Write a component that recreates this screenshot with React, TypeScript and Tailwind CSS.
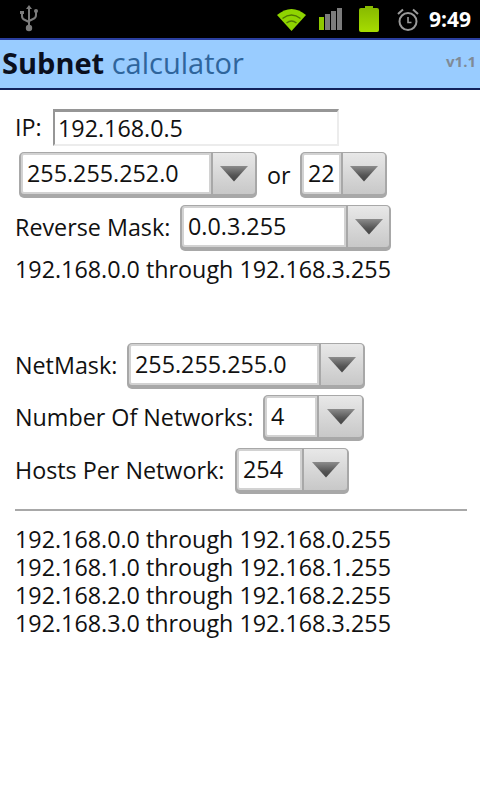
function Arrow() {
  return (
    <svg width="28" height="17" viewBox="0 0 28 17" className="block">
      <defs>
        <linearGradient id="arrowFill" x1="0" y1="0" x2="0" y2="1">
          <stop offset="0" stopColor="#8c8c8c" />
          <stop offset="0.6" stopColor="#555" />
          <stop offset="1" stopColor="#444" />
        </linearGradient>
      </defs>
      <path d="M0 1 H28 L14 16.5 Z" fill="url(#arrowFill)" />
    </svg>
  );
}

function Select({ value, box, btn }: { value: string; box: string; btn: string }) {
  return (
    <div className="flex h-[46px] shrink-0 rounded-[5px] bg-[#a8a8a8] pt-[1px] pb-[4px] pl-[2px] pr-[2px]">
      <div className={`${box} flex items-center rounded-l-[3px] border-2 border-[#d2d2d2] bg-white pl-[4px] pt-[1px] leading-none`}>{value}</div>
      <div className={`${btn} ml-[2px] flex items-center justify-center rounded-r-[3px] bg-gradient-to-b from-[#e8e8e8] to-[#c8c8c8]`}>
        <Arrow />
      </div>
    </div>
  );
}

const ranges = [
  '192.168.0.0 through 192.168.0.255',
  '192.168.1.0 through 192.168.1.255',
  '192.168.2.0 through 192.168.2.255',
  '192.168.3.0 through 192.168.3.255',
];

export default function App() {
  return (
    <div className="h-[800px] w-[480px] overflow-hidden bg-white font-['Open_Sans',sans-serif] text-[23.3px] text-[#111]">
      {/* status bar */}
      <div className="flex h-[38px] items-center bg-black pl-[20px] pr-[9px]">
        <svg width="18" height="27" viewBox="0 0 18 27" className="mt-[-1px]">
          <g fill="none" stroke="#7c7c7c" strokeWidth="2">
            <path d="M9 3 V22" />
            <path d="M2 8 V11 Q2 14 5 15 L9 17" />
            <path d="M16 7 V10 Q16 13 13 14 L9 16" />
          </g>
          <path d="M9 0 L12 4 H6 Z M0 6 H4 V9 H0 Z" fill="#7c7c7c" />
          <circle cx="16" cy="6" r="2" fill="#7c7c7c" />
          <circle cx="9" cy="23" r="3.2" fill="#7c7c7c" />
        </svg>
        <div className="flex-1" />
        <svg width="29" height="23" viewBox="0 0 29 23" className="mt-[1px]">
          <path d="M0 7 Q14.5 -5 29 7 L14.5 23 Z" fill="#8fd400" />
          <g fill="none" stroke="#4f7a00" strokeWidth="1.4">
            <path d="M5.5 10.5 Q14.5 3.5 23.5 10.5" />
            <path d="M9.5 15 Q14.5 11 19.5 15" />
          </g>
        </svg>
        <svg width="24" height="23" viewBox="0 0 24 23" className="ml-[13px] mt-[1px]">
          <rect x="0" y="9" width="5" height="13" fill="#8fc800" />
          <rect x="6" y="6" width="5" height="16" fill="#7c7c7c" />
          <rect x="12" y="3" width="5" height="19" fill="#7c7c7c" />
          <rect x="18" y="0" width="5" height="22" fill="#7c7c7c" />
        </svg>
        <svg width="20" height="26" viewBox="0 0 20 26" className="ml-[16px]">
          <defs>
            <linearGradient id="batteryFill" x1="0" y1="0" x2="0" y2="1">
              <stop offset="0" stopColor="#86b800" />
              <stop offset="1" stopColor="#a6dc00" />
            </linearGradient>
          </defs>
          <path d="M6 0 H14 V2 H18 Q20 2 20 4 V24 Q20 26 18 26 H2 Q0 26 0 24 V4 Q0 2 2 2 H6 Z" fill="url(#batteryFill)" />
        </svg>
        <svg width="22" height="24" viewBox="0 0 22 24" className="ml-[18px] mt-[1px]">
          <circle cx="11" cy="13.5" r="8.5" fill="none" stroke="#9a9a9a" strokeWidth="2" />
          <path d="M11 9 V14.5 H14.5" fill="none" stroke="#9a9a9a" strokeWidth="1.6" />
          <path d="M1 6 L6 1.5 M21 6 L16 1.5" stroke="#9a9a9a" strokeWidth="2" />
        </svg>
        <span className="ml-[10px] text-[21px] font-bold leading-none text-white">9:49</span>
      </div>

      {/* title bar */}
      <div className="flex h-[52px] items-center justify-between border-y-2 border-t-[#2a3fa0] border-b-[#12225c] bg-[#99ccff] pb-[3px] pl-[2px] pr-[4px]">
        <div className="text-[29px] leading-none">
          <span className="font-bold text-[#0a0f1e]">Subnet</span>
          <span className="text-[#2f659c]"> calculator</span>
        </div>
        <span className="mb-[2px] text-[15px] font-bold text-[#7f8a96]">v1.1</span>
      </div>

      <div className="pl-[15px]">
        <div className="mt-[19px] flex items-center">
          <span className="w-[38px]">IP:</span>
          <div className="flex h-[37px] w-[286px] items-center border-2 border-t-[3px] border-t-[#969696] border-l-[#969696] border-r-[#ececec] border-b-[#ececec] pl-[3px]">
            192.168.0.5
          </div>
        </div>

        <div className="mt-[6px] ml-[4px] flex items-center">
          <Select value="255.255.252.0" box="w-[190px]" btn="w-[42px]" />
          <span className="w-[43px] pl-[10px]">or</span>
          <Select value="22" box="w-[39px]" btn="w-[42px]" />
        </div>

        <div className="mt-[7px] flex items-center">
          <span className="w-[165px] pb-[2px]">Reverse Mask:</span>
          <Select value="0.0.3.255" box="w-[164px]" btn="w-[41px]" />
        </div>

        <div className="mt-[3px] h-[30px] leading-[30px]">192.168.0.0 through 192.168.3.255</div>

        <div className="mt-[59px] flex items-center">
          <span className="w-[112px] pb-[2px]">NetMask:</span>
          <Select value="255.255.255.0" box="w-[190px]" btn="w-[42px]" />
        </div>

        <div className="mt-[6px] flex items-center">
          <span className="w-[248px] pb-[2px]">Number Of Networks:</span>
          <Select value="4" box="w-[52px]" btn="w-[43px]" />
        </div>

        <div className="mt-[7px] flex items-center">
          <span className="w-[220px] pb-[2px]">Hosts Per Network:</span>
          <Select value="254" box="w-[65px]" btn="w-[43px]" />
        </div>

        <div className="mt-[15px] h-[2px] w-[452px] bg-[#a8a8a8]" />

        <div className="mt-[14px] leading-[28.1px]">
          {ranges.map(r => (
            <div key={r}>{r}</div>
          ))}
        </div>
      </div>
    </div>
  );
}
